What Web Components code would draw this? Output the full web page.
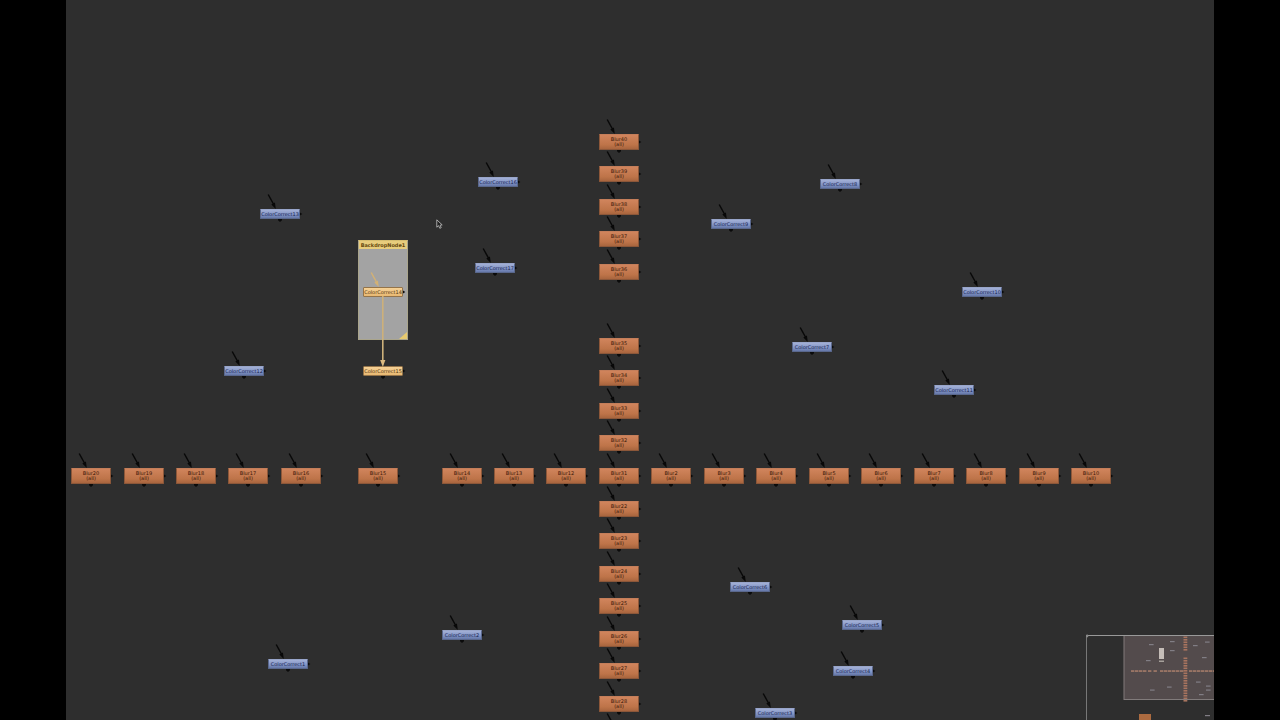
<!DOCTYPE html>
<html lang="en">
<head>
<meta charset="utf-8">
<title>Node Graph</title>
<style>
html, body { margin: 0; height: 100%; background: #000; }
body { font-family: "DejaVu Sans", sans-serif; }
</style>
</head>
<body>
<node-graph></node-graph>
<script>
const clone = html => {
  const t = document.createElement('template');
  t.innerHTML = html;
  return t.content.cloneNode(true);
};

// A node on the free canvas; x and y are the top left corner of its tile.
class GraphNode extends HTMLElement {
  connectedCallback() {
    this.attachShadow({ mode: 'open' }).append(clone(`
      <style>
        :host { position: absolute; display: block; width: 40px; --ink: #3a1707; --wire: #080808; --port: #0a0a0a; }
        .tile { box-sizing: border-box; height: 16px; padding-bottom: 1px; display: flex; flex-direction: column; align-items: center; justify-content: center;
          background: linear-gradient(#d0845c, #be7449 70%, #a8653e); border: 1px solid #8c5739; border-top-color: #c47e5a;
          border-radius: 1px; color: var(--ink); font-size: 5px; line-height: 5px; white-space: nowrap; }
        :host([kind=color]) { --ink: #17224e; }
        :host([kind=color]) .tile { height: 10px; padding-bottom: 0; background: linear-gradient(#a3b0d6, #8194c6 60%, #6577a8); border: 1px solid #5a688d; border-top-color: #98a5ca; }
        :host([selected]) { --ink: #50340e; --wire: #d3b174; }
        :host([kind=color][selected]) .tile { background: linear-gradient(#f6d195, #e8b872); border-color: #94744a; }
        svg { position: absolute; left: 0; top: -16px; width: 44px; height: 36px; overflow: visible; pointer-events: none; }
      </style>
      <div class="tile"><slot></slot></div>
      <svg viewBox="0 0 44 36" aria-hidden="true"></svg>`));
    this.style.left = this.getAttribute('x') + 'px';
    this.style.top = this.getAttribute('y') + 'px';
    const h = this.getAttribute('kind') === 'color' ? 10 : 16;
    const wire = this.hasAttribute('wired') ? '' :
      '<path d="M8.2 1.5 L14 12" stroke="var(--wire)" stroke-width="1.5"/><path d="M11.3 11.6 L14.9 9.6 L15.8 16Z" fill="var(--wire)"/>';
    const out = this.hasAttribute('source') ? '' :
      `<path d="M18 ${16 + h} h4 v1.2 l-2 1.9 l-2 -1.9Z" fill="var(--port)"/>`;
    this.shadowRoot.querySelector('svg').innerHTML = wire + out +
      `<path d="M40 ${14.6 + h / 2} l2.3 1.4 l-2.3 1.4Z" fill="var(--port)"/>`;
  }
}
customElements.define('graph-node', GraphNode);

class BackdropNode extends HTMLElement {
  connectedCallback() {
    this.attachShadow({ mode: 'open' }).append(clone(`
      <style>
        :host { position: absolute; box-sizing: border-box; display: block; width: 50px; height: 100px; background: #a3a3a3; border: 1px solid #aaa58c; border-top-color: #d6bd70; }
        header { height: 8px; background: #e8cc7c; color: #66490f; font-size: 5px; font-weight: bold; line-height: 8px; text-align: center; white-space: nowrap; }
        svg { position: absolute; right: 0; bottom: 0; width: 8px; height: 7px; }
      </style>
      <header><slot></slot></header>
      <svg viewBox="0 0 8 7" aria-hidden="true"><path d="M0 7 L8 0 V7Z" fill="#e6c96f"/></svg>`));
    this.style.left = this.getAttribute('x') + 'px';
    this.style.top = this.getAttribute('y') + 'px';
  }
}
customElements.define('backdrop-node', BackdropNode);

class MiniMap extends HTMLElement {
  connectedCallback() {
    let row = '', col = '', dots = '';
    for (const x of [45, 49, 53, 57, 62, 67.5, 74, 78, 82, 86, 90, 94, 103, 107, 111, 115, 119, 123, 127]) row += `<rect x="${x}" y="36.2" width="3.4" height="1.7"/>`;
    for (const y of [2.5, 5, 7.5, 10, 12.5, 15, 23.5, 26, 28.5, 31, 33.5, 36, 38.5, 41, 43.5, 46, 48.5, 51, 53.5, 56, 58.5, 61, 63.5, 66]) col += `<rect x="97.5" y="${y}" width="3.8" height="1.6"/>`;
    for (const [x, y] of [[63,10],[84,7],[84,16],[60,26],[107,11],[119,7.5],[116,23],[81,52.5],[64,55.5],[110,47.5],[120,51.5],[120,55.5],[113,60]]) dots += `<rect x="${x}" y="${y}" width="4.6" height="1.2"/>`;
    this.attachShadow({ mode: 'open' }).append(clone(`
      <style>
        :host { position: absolute; right: 0; bottom: 0; width: 128px; height: 86px; }
        svg { display: block; width: 100%; height: 100%; }
      </style>
      <svg viewBox="0 0 128 86" role="img" aria-label="Graph overview">
        <rect x=".5" y="1.5" width="140" height="100" fill="#2e2e2e" stroke="#777"/>
        <rect x="38" y="1.5" width="95" height="64" fill="#534b4c" stroke="#817b7b"/>
        <path d="M0 1.5 H128" stroke="#999"/>
        <circle cx="1" cy="2" r="1.4" fill="#8a8a8a"/>
        <g fill="#a07968">${row}</g>
        <g fill="#a8745f">${col}</g>
        <g fill="#817e85">${dots}<rect x="119" y="81" width="5" height="1.2"/></g>
        <rect x="73" y="14" width="5" height="11" fill="#c4bcb7"/>
        <rect x="73" y="26.5" width="5" height="1.5" fill="#a6a09a"/>
        <rect x="53" y="80" width="12" height="7" fill="#ac6b40"/>
      </svg>`));
  }
}
customElements.define('mini-map', MiniMap);

class NodeGraph extends HTMLElement {
  connectedCallback() {
    const blur = (n, x, y) => `<graph-node kind="blur" x="${x}" y="${y}"><span>Blur${n}</span><span>(all)</span></graph-node>`;
    const color = (n, x, y, extra = '') => `<graph-node kind="color" x="${x}" y="${y}" ${extra}><span>ColorCorrect${n}</span></graph-node>`;
    const row = [[20,5],[19,58],[18,110],[17,162],[16,215],[15,292],[14,376],[13,428],[12,480],
      [2,585],[3,638],[4,690],[5,743],[6,795],[7,848],[8,900],[9,953],[10,1005]].map(([n, x]) => blur(n, x, 468)).join('');
    const column = [[40,134],[39,166],[38,199],[37,231],[36,264],[35,338],[34,370],[33,403],[32,435],[31,468],
      [22,501],[23,533],[24,566],[25,598],[26,631],[27,663],[28,696]].map(([n, y]) => blur(n, 533, y)).join('');
    const colors = [[16,412,177],[13,194,209],[17,409,263],[12,158,366],[2,376,630],[1,202,659],[6,664,582],[5,776,620],
      [4,767,666],[3,689,708],[9,645,219],[8,754,179],[10,896,287],[7,726,342],[11,868,385]].map(a => color(...a)).join('');
    this.attachShadow({ mode: 'open' }).append(clone(`
      <style>
        :host { display: flex; min-height: 100vh; padding: 0 66px; box-sizing: border-box; background: #000; }
        main { flex: 1; min-width: 0; position: relative; overflow: hidden; background: #2e2e2e; }
        .link { position: absolute; left: 312px; top: 296px; width: 10px; height: 71px; }
        .pointer { position: absolute; left: 370px; top: 219px; width: 7px; height: 10px; }
      </style>
      <main>
        <backdrop-node x="292" y="240">BackdropNode1</backdrop-node>
        ${row}${column}${colors}
        <graph-node kind="blur" x="533" y="728"></graph-node>
        ${color(14, 297, 287, 'selected source')}
        ${color(15, 297, 366, 'selected wired')}
        <svg class="link" viewBox="0 0 10 71" aria-hidden="true"><path d="M4.8 0 V66" stroke="#cdb07a" stroke-width="1.6"/><path d="M2.2 64 H7.4 L4.8 71Z" fill="#dcba80"/></svg>
        <svg class="pointer" viewBox="0 0 7 10" aria-hidden="true"><path d="M.8 .8 V8.2 L2.6 6.7 L3.8 9.3 L5.2 8.7 L4.1 6.2 L6.2 5.9Z" fill="#222" stroke="#c6c6c6" stroke-width=".8"/></svg>
        <mini-map></mini-map>
      </main>`));
  }
}
customElements.define('node-graph', NodeGraph);
</script>
</body>
</html>
